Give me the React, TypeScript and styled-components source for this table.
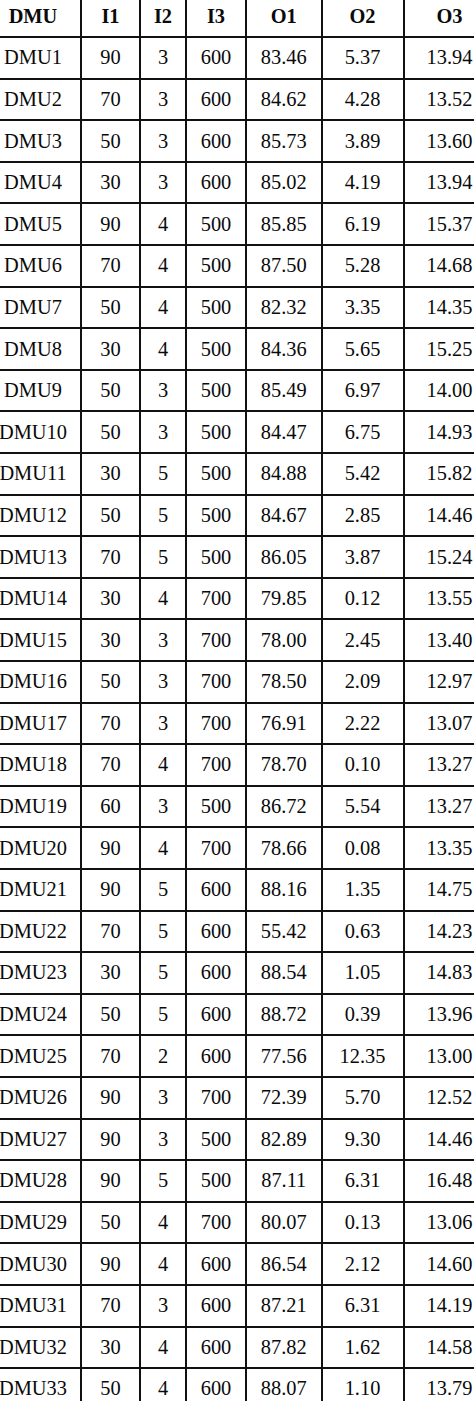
import React from "react";
import styled, { createGlobalStyle } from "styled-components";

const GlobalStyle = createGlobalStyle`
  html, body {
    margin: 0;
    padding: 0;
    background: #ffffff;
    overflow: hidden;
  }
  body {
    font-family: "Liberation Serif", "Times New Roman", serif;
    color: #000;
  }
`;

const Viewport = styled.div`
  width: 474px;
  height: 1401px;
  overflow: hidden;
  background: #fff;
`;

const Table = styled.table`
  border-collapse: collapse;
  table-layout: fixed;
  width: 510.5px;
  margin: -5.5px 0 0 -16px;
  font-family: "Liberation Serif", "Times New Roman", serif;
  font-size: 20.4px;
  color: #0a0a0a;
`;

const Row = styled.tr`
  height: 41.6px;
`;

const HeadCell = styled.th`
  border: 2px solid #111;
  font-weight: 700;
  text-align: center;
  vertical-align: middle;
  padding: 0;
`;

const Cell = styled.td`
  border: 2px solid #111;
  font-weight: 400;
  text-align: center;
  vertical-align: middle;
  padding: 0;
  white-space: nowrap;
`;

const widths = [96, 59, 46, 60, 75.5, 82, 92];
const headers = ["DMU", "I1", "I2", "I3", "O1", "O2", "O3"];

const data: (string | number)[][] = [
  [90, 3, 600, "83.46", "5.37", "13.94"],
  [70, 3, 600, "84.62", "4.28", "13.52"],
  [50, 3, 600, "85.73", "3.89", "13.60"],
  [30, 3, 600, "85.02", "4.19", "13.94"],
  [90, 4, 500, "85.85", "6.19", "15.37"],
  [70, 4, 500, "87.50", "5.28", "14.68"],
  [50, 4, 500, "82.32", "3.35", "14.35"],
  [30, 4, 500, "84.36", "5.65", "15.25"],
  [50, 3, 500, "85.49", "6.97", "14.00"],
  [50, 3, 500, "84.47", "6.75", "14.93"],
  [30, 5, 500, "84.88", "5.42", "15.82"],
  [50, 5, 500, "84.67", "2.85", "14.46"],
  [70, 5, 500, "86.05", "3.87", "15.24"],
  [30, 4, 700, "79.85", "0.12", "13.55"],
  [30, 3, 700, "78.00", "2.45", "13.40"],
  [50, 3, 700, "78.50", "2.09", "12.97"],
  [70, 3, 700, "76.91", "2.22", "13.07"],
  [70, 4, 700, "78.70", "0.10", "13.27"],
  [60, 3, 500, "86.72", "5.54", "13.27"],
  [90, 4, 700, "78.66", "0.08", "13.35"],
  [90, 5, 600, "88.16", "1.35", "14.75"],
  [70, 5, 600, "55.42", "0.63", "14.23"],
  [30, 5, 600, "88.54", "1.05", "14.83"],
  [50, 5, 600, "88.72", "0.39", "13.96"],
  [70, 2, 600, "77.56", "12.35", "13.00"],
  [90, 3, 700, "72.39", "5.70", "12.52"],
  [90, 3, 500, "82.89", "9.30", "14.46"],
  [90, 5, 500, "87.11", "6.31", "16.48"],
  [50, 4, 700, "80.07", "0.13", "13.06"],
  [90, 4, 600, "86.54", "2.12", "14.60"],
  [70, 3, 600, "87.21", "6.31", "14.19"],
  [30, 4, 600, "87.82", "1.62", "14.58"],
  [50, 4, 600, "88.07", "1.10", "13.79"],
];

export default function App() {
  return (
    <>
      <GlobalStyle />
      <Viewport>
        <Table>
          <colgroup>
            {widths.map((w, i) => (
              <col key={i} style={{ width: `${w}px` }} />
            ))}
          </colgroup>
          <thead>
            <Row>
              {headers.map((h) => (
                <HeadCell key={h}>{h}</HeadCell>
              ))}
            </Row>
          </thead>
          <tbody>
            {data.map((r, i) => (
              <Row key={i}>
                <Cell>{`DMU${i + 1}`}</Cell>
                {r.map((v, j) => (
                  <Cell key={j}>{v}</Cell>
                ))}
              </Row>
            ))}
          </tbody>
        </Table>
      </Viewport>
    </>
  );
}
